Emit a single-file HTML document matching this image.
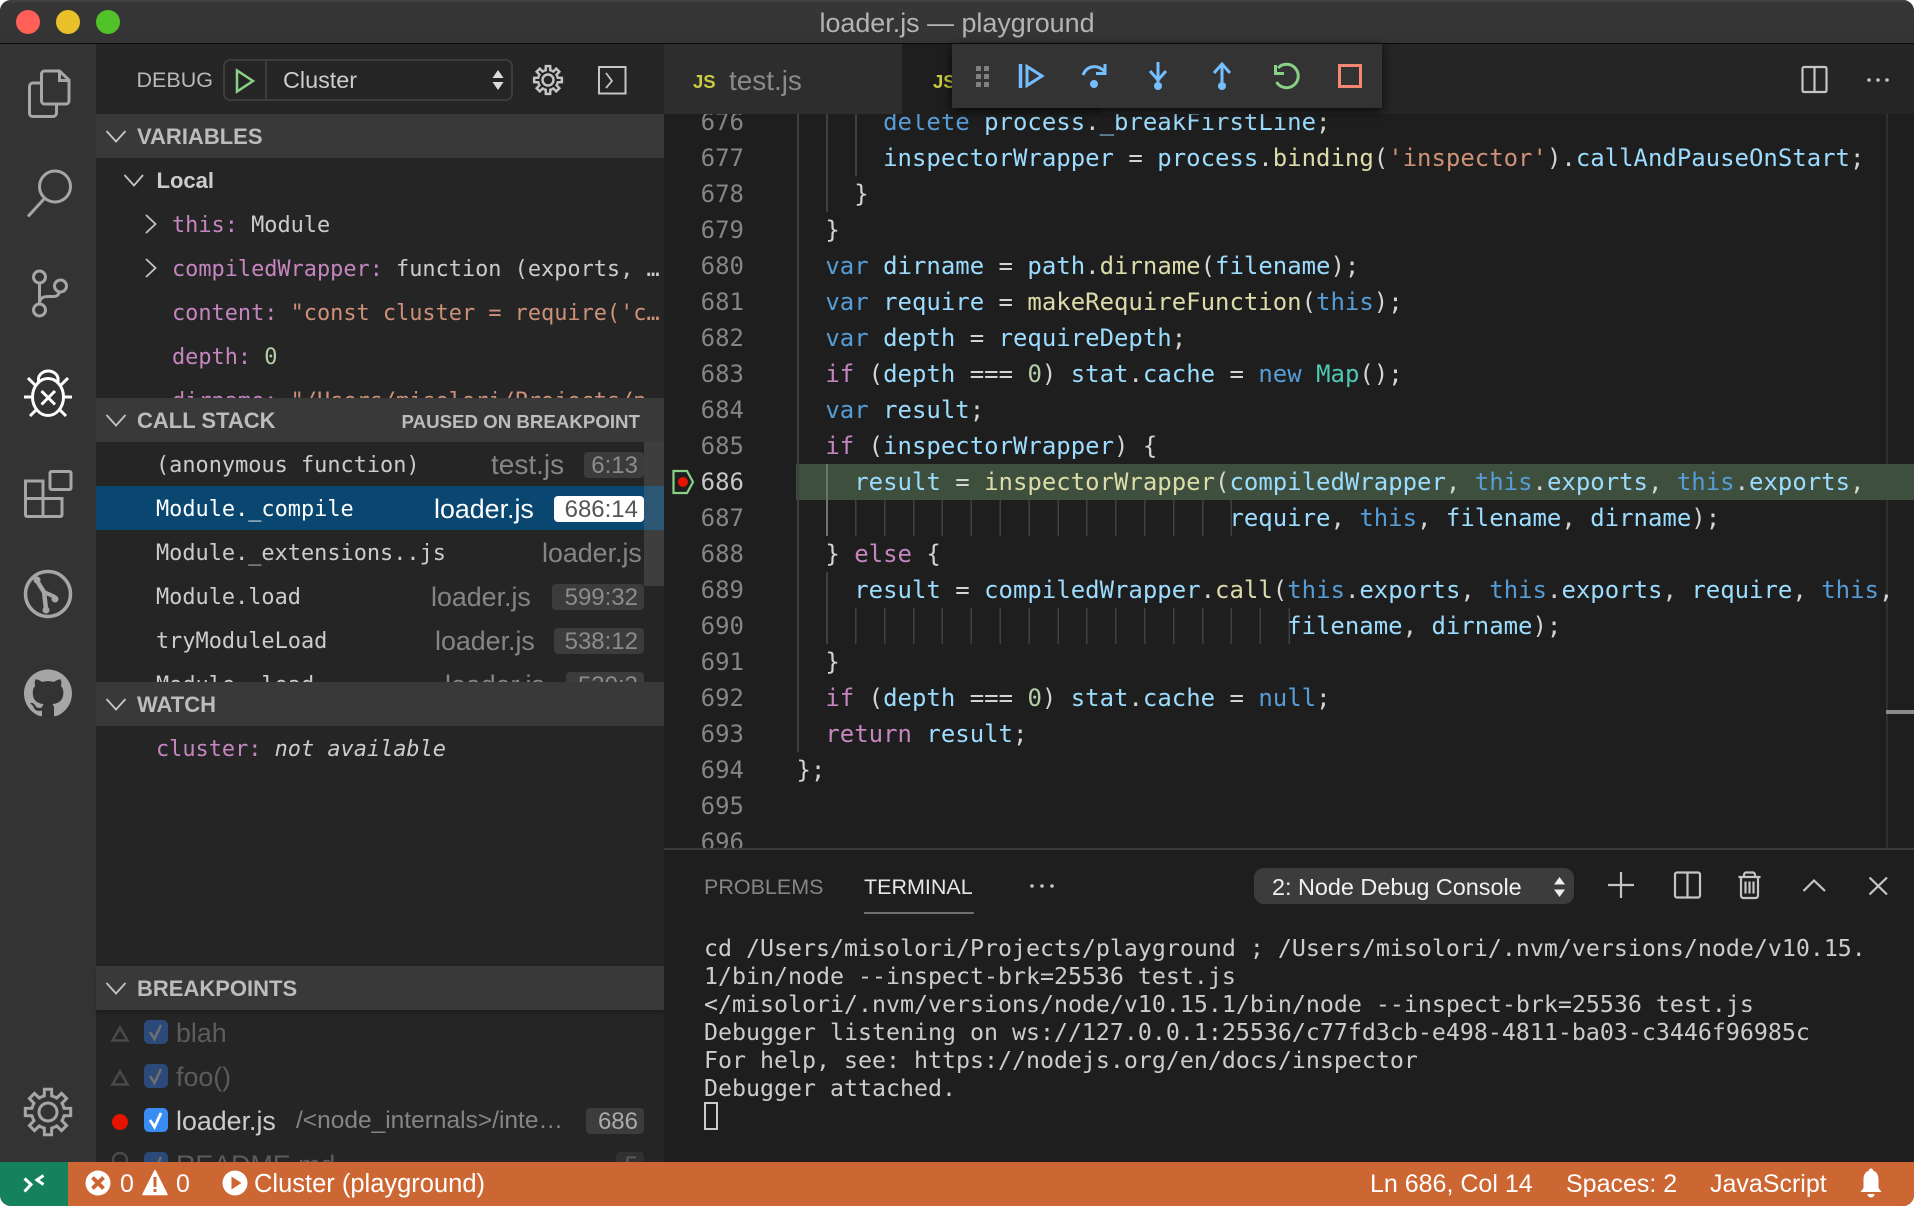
<!DOCTYPE html>
<html><head><meta charset="utf-8"><title>loader.js — playground</title>
<style>
html,body{margin:0;padding:0;background:#fff;width:1914px;height:1206px;overflow:hidden}
#w{position:absolute;left:0;top:0;width:1914px;height:1206px;overflow:hidden;border-radius:11px;background:#252526;font-family:"Liberation Sans",sans-serif}
#w div,#w span.a,#w svg{position:absolute}
svg{overflow:visible}
.m{font-family:"DejaVu Sans Mono","Liberation Mono",monospace;font-variant-ligatures:none;white-space:pre}
.hdr{left:96px;width:568px;height:44px;background:#393939;color:#bcbcbc;font-weight:bold;font-size:22px;line-height:46px;text-indent:41px}
.row{height:44px;line-height:44px;white-space:pre;overflow:hidden}
.sm{font-family:"DejaVu Sans Mono",monospace;font-size:21.9px;color:#ccc;white-space:pre;line-height:47px;height:44px}
.f{font-size:26.8px;color:#858585;line-height:46px;height:44px;white-space:pre}
.b{background:#3c3c3c;color:#8c8c8c;font-size:24px;line-height:27px;height:26px;border-radius:4px;text-align:right;padding-right:6px;box-sizing:border-box;white-space:pre}
.p{color:#c586c0}.k{color:#569cd6}.v{color:#9cdcfe}.fn{color:#dcdcaa}.s{color:#ce9178}.n{color:#b5cea8}.t{color:#4ec9b0}
.ln{left:664px;width:80px;text-align:right;color:#858585;font-size:24px;line-height:36px;height:36px}
.c{left:796.5px;font-size:23.97px;line-height:36px;height:36px;color:#d4d4d4}
.g{background:#404040;width:1.5px}
.gg{background:repeating-linear-gradient(90deg,#404040 0,#404040 1.5px,transparent 1.5px,transparent 28.9px)}
.term{left:704px;font-size:23.25px;line-height:28px;height:28px;color:#ccc}
.st{color:#fff;font-size:25px;line-height:44px;height:44px;top:1162px;white-space:pre}
</style></head><body><div id="w">

<!-- title bar -->
<div style="left:0;top:0;width:1914px;height:43px;background:linear-gradient(#444444,#363636 8%,#343434);border-bottom:1.5px solid #0c0c0c"></div>
<div style="left:16px;top:10px;width:24px;height:24px;border-radius:50%;background:#fe5f57"></div>
<div style="left:56px;top:10px;width:24px;height:24px;border-radius:50%;background:#e8c02a"></div>
<div style="left:96px;top:10px;width:24px;height:24px;border-radius:50%;background:#52c22b"></div>
<div style="left:0;width:1914px;top:4px;height:38px;line-height:38px;text-align:center;color:#b4b4b4;font-size:26.9px;white-space:pre;text-indent:0">loader.js — playground</div>

<!-- activity bar -->
<div style="left:0;top:44px;width:96px;height:1118px;background:#333333"></div>
<svg style="left:0;top:0" width="96" height="1162" fill="none" stroke="#a6a6a6" stroke-width="3">
 <path d="M41 83H33a3.500 3.500 0 0 0-3.500 3.500V113.500a3 3 0 0 0 3 3H53a3.500 3.500 0 0 0 3.500-3.500V105"/>
 <path d="M44.500 71H59.500L69 80V101a3 3 0 0 1-3 3H44.500a3 3 0 0 1-3-3V74a3 3 0 0 1 3-3Z"/>
 <path d="M59.500 71.500V80.500H68.500"/>
 <circle cx="55" cy="186.500" r="15.500"/><path d="M44 199 28 216.500"/>
 <circle cx="39.500" cy="277" r="6"/><circle cx="60.500" cy="286" r="6"/><circle cx="39.500" cy="310" r="6"/>
 <path d="M39.500 283V304M39.500 302C41 297 44 296.500 49 296.500H54C57 296.500 58.500 295 59.500 292"/>
 <g stroke="#fff">
  <path d="M38.500 382V378A10 9 0 0 1 58 378V382"/>
  <ellipse cx="48" cy="397" rx="15.500" ry="18.500"/>
  <path d="M41.500 391 55 404.500M55 391 41.500 404.500M28 378 35 385M68 378 61 385M24 397H32.500M64 397H72M30 416 37 409M66 416 59 409"/>
 </g>
 <path d="M51.500 471.500h18a1.500 1.500 0 0 1 1.500 1.500v15a1.500 1.500 0 0 1-1.500 1.500h-18a1.500 1.500 0 0 1-1.500-1.500v-15a1.500 1.500 0 0 1 1.500-1.500Z"/>
 <path d="M25.500 481h17.500V498.500H62V515a1.500 1.500 0 0 1-1.500 1.500H27a1.500 1.500 0 0 1-1.500-1.500ZM25.500 498.500H43V516.500"/>
 <circle cx="48" cy="594" r="22.500" stroke-width="3.500"/>
 <path d="M37 581 44 592 46 609" stroke-width="4.500"/><path d="M44 592 55 597" stroke-width="4"/>
 <circle cx="46" cy="610" r="3.500" fill="#a6a6a6" stroke="none"/><circle cx="55" cy="599" r="3.500" fill="#a6a6a6" stroke="none"/><circle cx="37" cy="580" r="3.500" fill="#a6a6a6" stroke="none"/>
 <path fill="#a6a6a6" stroke="none" transform="translate(24 669.500) scale(3)" d="M8 0C3.580 0 0 3.580 0 8c0 3.540 2.290 6.530 5.470 7.590.4.070.55-.17.55-.38 0-.19-.01-.82-.01-1.490-2.010.37-2.530-.49-2.690-.94-.09-.23-.48-.94-.82-1.130-.28-.15-.68-.52-.01-.53.63-.01 1.080.58 1.230.82.72 1.210 1.870.87 2.330.66.07-.52.28-.87.51-1.070-1.780-.2-3.640-.89-3.640-3.950 0-.87.31-1.590.82-2.150-.08-.2-.36-1.020.08-2.120 0 0 .67-.21 2.200.82.64-.18 1.320-.27 2-.27.68 0 1.360.09 2 .27 1.530-1.040 2.200-.82 2.200-.82.44 1.100.16 1.920.08 2.120.51.56.82 1.270.82 2.150 0 3.070-1.870 3.750-3.650 3.950.29.25.54.73.54 1.480 0 1.070-.01 1.930-.01 2.200 0 .21.15.46.55.38A8.013 8.013 0 0016 8c0-4.420-3.580-8-8-8z"/>
</svg>
<svg style="left:0;top:0" width="96" height="1162" fill="none" stroke="#a6a6a6" stroke-width="3">
 <defs><path id="t" d="M-6.310 -15.240L-3.710 -16.080L-3.600 -22.720L3.600 -22.720L3.710 -16.080L6.310 -15.240"/></defs>
 <g transform="translate(48 1112)">
  <use href="#t"/><use href="#t" transform="rotate(45)"/><use href="#t" transform="rotate(90)"/><use href="#t" transform="rotate(135)"/><use href="#t" transform="rotate(180)"/><use href="#t" transform="rotate(225)"/><use href="#t" transform="rotate(270)"/><use href="#t" transform="rotate(315)"/>
  <circle r="9"/>
 </g>
</svg>

<!-- sidebar -->
<div style="left:96px;top:44px;width:568px;height:1118px;background:#252526"></div>
<div style="left:136.500px;top:58px;height:44px;line-height:44px;font-size:21.500px;color:#b8b8b8">DEBUG</div>
<div style="left:223px;top:59px;width:290px;height:42px;box-sizing:border-box;border:2px solid #3c3c3c;border-radius:7px"></div>
<div style="left:265px;top:61px;width:2px;height:38px;background:#3c3c3c"></div>
<svg style="left:0;top:0" width="664" height="110" fill="none">
 <path d="M237 70.500V91.500L253 81Z" stroke="#89d185" stroke-width="2.500"/>
 <path d="M498 70 503.500 78H492.500ZM498 90 503.500 82H492.500Z" fill="#ddd"/>
 <g transform="translate(548 80) scale(.61)" stroke="#c5c5c5" stroke-width="4">
  <use href="#t"/><use href="#t" transform="rotate(45)"/><use href="#t" transform="rotate(90)"/><use href="#t" transform="rotate(135)"/><use href="#t" transform="rotate(180)"/><use href="#t" transform="rotate(225)"/><use href="#t" transform="rotate(270)"/><use href="#t" transform="rotate(315)"/>
  <circle r="9"/>
 </g>
 <rect x="599" y="67" width="26.500" height="26.500" stroke="#c5c5c5" stroke-width="2"/>
 <path d="M606 73 612 81 606 88" stroke="#c5c5c5" stroke-width="1.800"/>
</svg>
<div style="left:283px;top:58px;height:44px;line-height:44px;font-size:23.400px;color:#ccc">Cluster</div>

<div class="hdr" style="top:114px">VARIABLES</div>
<div class="hdr" style="top:398px">CALL STACK</div>
<div style="left:401.500px;top:398px;height:46px;line-height:47.500px;font-size:18.700px;font-weight:bold;color:#bcbcbc;white-space:pre">PAUSED ON BREAKPOINT</div>
<div class="hdr" style="top:682px">WATCH</div>
<div class="hdr" style="top:966px;box-shadow:0 3px 5px rgba(0,0,0,.2)">BREAKPOINTS</div>

<!-- variables -->
<div style="left:96px;top:158px;width:564px;height:240px;overflow:hidden">
 <div style="left:60.500px;top:0;height:44px;line-height:46px;font-weight:bold;font-size:22px;color:#ccc">Local</div>
 <div class="sm" style="left:76px;top:44px"><span class="p">this:</span> Module</div>
 <div class="sm" style="left:76px;top:88px"><span class="p">compiledWrapper:</span> function (exports, …</div>
 <div class="sm" style="left:76px;top:132px"><span class="p">content:</span> <span class="s">"const cluster = require('c…</span></div>
 <div class="sm" style="left:76px;top:176px"><span class="p">depth:</span> <span class="n">0</span></div>
 <div class="sm" style="left:76px;top:220px"><span class="p">dirname:</span> <span class="s">"/Users/misolori/Projects/p…</span></div>
</div>

<!-- chevrons -->
<svg style="left:0;top:0" width="664" height="1010" fill="none" stroke="#c5c5c5" stroke-width="1.800">
 <path d="M106.500 131 116 141.500 125.500 131M106.500 415 116 425.500 125.500 415M106.500 699 116 709.500 125.500 699M106.500 983 116 993.500 125.500 983"/>
 <path d="M124.500 175 134 185.500 143 175"/>
 <path d="M146 215 155.500 224 146 233M146 259 155.500 268 146 277"/>
</svg>

<!-- call stack -->
<div style="left:96px;top:442px;width:568px;height:240px;overflow:hidden">
 <div style="left:0;top:44px;width:568px;height:44px;background:#094771"></div>
 <div class="sm" style="left:60px;top:0">(anonymous function)</div>
 <div class="f" style="left:395px;top:0;font-size:28px">test.js</div>
 <div class="b" style="left:488px;top:10px;width:60px">6:13</div>

 <div class="sm" style="left:60px;top:44px;color:#fff">Module._compile</div>
 <div class="f" style="left:338px;top:44px;color:#fff">loader.js</div>
 <div class="b" style="left:458px;top:54px;width:90px;background:#fff;color:#555">686:14</div>

 <div class="sm" style="left:60px;top:88px">Module._extensions..js</div>
 <div class="f" style="left:446px;top:88px;width:101px;overflow:hidden">loader.js</div>

 <div class="sm" style="left:60px;top:132px">Module.load</div>
 <div class="f" style="left:335px;top:132px">loader.js</div>
 <div class="b" style="left:456px;top:142px;width:92px">599:32</div>

 <div class="sm" style="left:60px;top:176px">tryModuleLoad</div>
 <div class="f" style="left:339px;top:176px">loader.js</div>
 <div class="b" style="left:458px;top:186px;width:90px">538:12</div>

 <div class="sm" style="left:60px;top:220px">Module._load</div>
 <div class="f" style="left:349px;top:220px">loader.js</div>
 <div class="b" style="left:470px;top:230px;width:78px">530:3</div>

 <div style="left:548px;top:0;width:20px;height:144px;background:rgba(121,121,121,.3)"></div>
</div>

<!-- watch -->
<div class="sm" style="left:156px;top:726px"><span class="p">cluster:</span> <i>not available</i></div>

<!-- breakpoints -->
<div style="left:96px;top:1010px;width:568px;height:152px;overflow:hidden">
 <svg style="left:0;top:0" width="568" height="152" fill="none">
  <path d="M31.500 30.500 H16.500 L24 17.500 Z M31.500 74.500 H16.500 L24 61.500 Z" stroke="#4a4a4a" stroke-width="2.500"/>
  <circle cx="24" cy="112" r="8" fill="#e51400"/>
  <circle cx="24" cy="150" r="7" stroke="#4a4a4a" stroke-width="2.500"/>
  <rect x="48" y="10" width="24" height="24" rx="5" fill="#2b4a7a"/>
  <rect x="48" y="54" width="24" height="24" rx="5" fill="#2b4a7a"/>
  <rect x="48" y="98" width="24" height="24" rx="5" fill="#3a8cf5"/>
  <rect x="48" y="142" width="24" height="24" rx="5" fill="#2b4a7a"/>
  <path d="M54 22 58.500 29 65 15M54 66 58.500 73 65 59M54 154 58.500 161 65 147" stroke="#6e6e6e" stroke-width="2.500"/>
  <path d="M54 110 58.500 117 65 103" stroke="#fff" stroke-width="2.800"/>
 </svg>
 <div class="f" style="left:80px;top:0;color:#5c5c5c">blah</div>
 <div class="f" style="left:80px;top:44px;color:#5c5c5c">foo()</div>
 <div class="f" style="left:80px;top:88px;color:#ccc">loader.js</div>
 <div class="f" style="left:200px;top:88px;width:270px;overflow:hidden;font-size:24.500px;color:#858585">/&lt;node_internals&gt;/inte…</div>
 <div class="b" style="left:490px;top:98px;width:58px;color:#aaa">686</div>
 <div class="f" style="left:80px;top:132px;color:#5c5c5c">README.md</div>
 <div class="b" style="left:520px;top:142px;width:28px;background:#313131;color:#5c5c5c">5</div>
</div>

<!-- editor -->
<div style="left:664px;top:44px;width:1250px;height:1118px;background:#1e1e1e"></div>
<div id="code" style="left:664px;top:114px;width:1250px;height:734px;overflow:hidden">
 <div style="left:1222px;top:0;width:1.500px;height:734px;background:#2f2f2f"></div>
 <div style="left:132px;top:350px;width:1118px;height:36px;background:#3e4f3d"></div>
 <div class="g" style="left:133px;top:0;height:638px"></div>
 <div class="g" style="left:162px;top:0;height:98px"></div>
 <div class="g" style="left:191px;top:0;height:62px"></div>
 <div class="g" style="left:162px;top:350px;height:72px;background:#707070"></div>
 <div class="g" style="left:162px;top:458px;height:72px"></div>
 <div class="gg" style="left:191px;top:386px;height:36px;width:377.500px"></div>
 <div class="gg" style="left:191px;top:494px;height:36px;width:435.300px"></div>
 <div style="left:1222px;top:596px;width:28px;height:4px;background:#8a8a8a"></div>
</div>
<div style="left:664px;top:114px;width:1250px;height:734px;overflow:hidden">
 <div style="left:-664px;top:-114px;width:1914px;height:1206px">
<div class="ln m" style="top:104px">676</div><div class="c m" style="top:104px">      <span class="k">delete</span> <span class="v">process</span>.<span class="v">_breakFirstLine</span>;</div>
<div class="ln m" style="top:140px">677</div><div class="c m" style="top:140px">      <span class="v">inspectorWrapper</span> = <span class="v">process</span>.<span class="fn">binding</span>(<span class="s">'inspector'</span>).<span class="v">callAndPauseOnStart</span>;</div>
<div class="ln m" style="top:176px">678</div><div class="c m" style="top:176px">    }</div>
<div class="ln m" style="top:212px">679</div><div class="c m" style="top:212px">  }</div>
<div class="ln m" style="top:248px">680</div><div class="c m" style="top:248px">  <span class="k">var</span> <span class="v">dirname</span> = <span class="v">path</span>.<span class="fn">dirname</span>(<span class="v">filename</span>);</div>
<div class="ln m" style="top:284px">681</div><div class="c m" style="top:284px">  <span class="k">var</span> <span class="v">require</span> = <span class="fn">makeRequireFunction</span>(<span class="k">this</span>);</div>
<div class="ln m" style="top:320px">682</div><div class="c m" style="top:320px">  <span class="k">var</span> <span class="v">depth</span> = <span class="v">requireDepth</span>;</div>
<div class="ln m" style="top:356px">683</div><div class="c m" style="top:356px">  <span class="p">if</span> (<span class="v">depth</span> === <span class="n">0</span>) <span class="v">stat</span>.<span class="v">cache</span> = <span class="k">new</span> <span class="t">Map</span>();</div>
<div class="ln m" style="top:392px">684</div><div class="c m" style="top:392px">  <span class="k">var</span> <span class="v">result</span>;</div>
<div class="ln m" style="top:428px">685</div><div class="c m" style="top:428px">  <span class="p">if</span> (<span class="v">inspectorWrapper</span>) {</div>
<div class="ln m" style="top:464px;color:#c6c6c6">686</div><div class="c m" style="top:464px">    <span class="v">result</span> = <span class="fn">inspectorWrapper</span>(<span class="v">compiledWrapper</span>, <span class="k">this</span>.<span class="v">exports</span>, <span class="k">this</span>.<span class="v">exports</span>,</div>
<div class="ln m" style="top:500px">687</div><div class="c m" style="top:500px">                              <span class="v">require</span>, <span class="k">this</span>, <span class="v">filename</span>, <span class="v">dirname</span>);</div>
<div class="ln m" style="top:536px">688</div><div class="c m" style="top:536px">  } <span class="p">else</span> {</div>
<div class="ln m" style="top:572px">689</div><div class="c m" style="top:572px">    <span class="v">result</span> = <span class="v">compiledWrapper</span>.<span class="fn">call</span>(<span class="k">this</span>.<span class="v">exports</span>, <span class="k">this</span>.<span class="v">exports</span>, <span class="v">require</span>, <span class="k">this</span>,</div>
<div class="ln m" style="top:608px">690</div><div class="c m" style="top:608px">                                  <span class="v">filename</span>, <span class="v">dirname</span>);</div>
<div class="ln m" style="top:644px">691</div><div class="c m" style="top:644px">  }</div>
<div class="ln m" style="top:680px">692</div><div class="c m" style="top:680px">  <span class="p">if</span> (<span class="v">depth</span> === <span class="n">0</span>) <span class="v">stat</span>.<span class="v">cache</span> = <span class="k">null</span>;</div>
<div class="ln m" style="top:716px">693</div><div class="c m" style="top:716px">  <span class="p">return</span> <span class="v">result</span>;</div>
<div class="ln m" style="top:752px">694</div><div class="c m" style="top:752px">};</div>
<div class="ln m" style="top:788px">695</div>
<div class="ln m" style="top:824px">696</div>
 </div>
</div>
<svg style="left:0;top:0" width="720" height="520" fill="none">
 <path d="M673.500 471H687L693 482 687 493H673.500Z" stroke="#89d185" stroke-width="2.200"/>
 <circle cx="683" cy="482" r="5" fill="#e51400"/>
</svg>

<!-- tabs -->
<div style="left:664px;top:44px;width:1250px;height:70px;background:#252526"></div>
<div style="left:664px;top:44px;width:238px;height:70px;background:#2d2d2d"></div>
<div style="left:902px;top:44px;width:200px;height:70px;background:#1e1e1e"></div>
<div style="left:693px;top:64px;height:36px;line-height:36px;font-size:18.500px;font-weight:bold;color:#cbcb41">JS</div>
<div style="left:729px;top:63px;height:36px;line-height:36px;font-size:27.900px;color:#8a8a8a">test.js</div>
<div style="left:933px;top:64px;height:36px;line-height:36px;font-size:18.500px;font-weight:bold;color:#cbcb41">JS</div>
<svg style="left:1790px;top:55px" width="124" height="50" fill="none" stroke="#c5c5c5" stroke-width="2.200">
 <rect x="12.500" y="12" width="24" height="25" rx="1.500"/><path d="M24.500 12V37"/>
 <circle cx="79" cy="25" r="1.800" fill="#c5c5c5" stroke="none"/><circle cx="88" cy="25" r="1.800" fill="#c5c5c5" stroke="none"/><circle cx="97" cy="25" r="1.800" fill="#c5c5c5" stroke="none"/>
</svg>

<!-- debug toolbar -->
<div style="left:952px;top:44px;width:430px;height:64px;background:#333333;box-shadow:0 3px 10px rgba(0,0,0,.75)"></div>
<svg style="left:950px;top:40px" width="440" height="80" fill="none">
 <g fill="#7f7f7f"><rect x="26" y="26" width="5" height="5"/><rect x="34" y="26" width="5" height="5"/><rect x="26" y="34" width="5" height="5"/><rect x="34" y="34" width="5" height="5"/><rect x="26" y="42" width="5" height="5"/><rect x="34" y="42" width="5" height="5"/></g>
 <g stroke="#75beff" stroke-width="3">
  <path d="M70.500 24V48" stroke-width="3.500"/>
  <path d="M77 26.500V45.500L92 36Z"/>
  <path d="M133 35C137 25 148 24 155 32"/>
  <path d="M155 24V33.500H146"/>
  <path d="M208 22V42M200 31 208 40 216 31"/>
  <path d="M272 42V24M264 33 272 24 280 33"/>
 </g>
 <g fill="#75beff"><circle cx="144" cy="44" r="4"/><circle cx="208" cy="46" r="4"/><circle cx="272" cy="46" r="4"/></g>
 <path d="M328 28A11.700 11.700 0 1 1 326.500 42M325.500 25V33.500H334" stroke="#89d185" stroke-width="3"/>
 <rect x="389.500" y="25.500" width="21" height="21" stroke="#f48771" stroke-width="3"/>
</svg>

<!-- panel -->
<div style="left:664px;top:848px;width:1250px;height:314px;background:#1e1e1e;border-top:2px solid #3a3a3a;box-sizing:border-box"></div>
<div style="left:704px;top:869px;height:36px;line-height:36px;font-size:21.500px;color:#858585">PROBLEMS</div>
<div style="left:864px;top:869px;height:36px;line-height:36px;font-size:21.500px;color:#e7e7e7">TERMINAL</div>
<div style="left:864px;top:912px;width:110px;height:2px;background:#6e6e6e"></div>
<div style="left:1254px;top:868px;width:320px;height:36px;background:#3c3c3c;border-radius:10px"></div>
<div style="left:1272px;top:868.500px;height:36px;line-height:36px;font-size:23.400px;color:#f0f0f0;white-space:pre">2: Node Debug Console</div>
<svg style="left:1020px;top:860px" width="894" height="60" fill="none" stroke="#c5c5c5" stroke-width="2.200">
 <circle cx="12" cy="26" r="1.800" fill="#c5c5c5" stroke="none"/><circle cx="22" cy="26" r="1.800" fill="#c5c5c5" stroke="none"/><circle cx="32" cy="26" r="1.800" fill="#c5c5c5" stroke="none"/>
 <path d="M539.500 17 545 24.500H534ZM539.500 37 545 29.500H534Z" fill="#eee" stroke="none"/>
 <path d="M588 25H614M601 12V38"/>
 <rect x="655" y="12.500" width="25" height="25" rx="2"/><path d="M667.500 12.500V37.500"/>
 <path d="M718.500 17H740.500M724 17V15C724 13.500 725 12.500 726 12.500H733C734 12.500 735 13.500 735 15V17M721 17.500V35.500C721 37 722 38 723.500 38H735.500C737 38 738 37 738 35.500V17.500M725.500 21.500V33.500M729.500 21.500V33.500M733.500 21.500V33.500"/>
 <path d="M783.500 31 794 20.500 805 31"/>
 <path d="M849.500 17.500 867 34.500M867 17.500 849.500 34.500"/>
</svg>

<div class="term m" style="top:935px">cd /Users/misolori/Projects/playground ; /Users/misolori/.nvm/versions/node/v10.15.</div>
<div class="term m" style="top:963px">1/bin/node --inspect-brk=25536 test.js</div>
<div class="term m" style="top:991px">&lt;/misolori/.nvm/versions/node/v10.15.1/bin/node --inspect-brk=25536 test.js</div>
<div class="term m" style="top:1019px">Debugger listening on ws://127.0.0.1:25536/c77fd3cb-e498-4811-ba03-c3446f96985c</div>
<div class="term m" style="top:1047px">For help, see: https://nodejs.org/en/docs/inspector</div>
<div class="term m" style="top:1075px">Debugger attached.</div>
<div style="left:704px;top:1102px;width:14px;height:28px;box-sizing:border-box;border:2px solid #ccc"></div>

<!-- status bar -->
<div style="left:0;top:1162px;width:1914px;height:44px;background:#cc6633"></div>
<div style="left:0;top:1162px;width:68px;height:44px;background:#16825d"></div>
<svg style="left:0;top:1162px" width="320" height="44" fill="none">
 <path d="M24.500 16.500 31 22.500 24.500 29.500M43.500 13.500 37 18 43.500 22.500" stroke="#fff" stroke-width="3"/>
 <circle cx="98" cy="21" r="12.500" fill="#fff"/>
 <path d="M92.500 15.500 103.500 26.500M103.500 15.500 92.500 26.500" stroke="#cc6633" stroke-width="4"/>
 <path d="M155 8.500 167 32.500H143Z" fill="#fff" stroke="#fff" stroke-width="1.500" stroke-linejoin="round"/>
 <path d="M155 15V25M155 27V30" stroke="#cc6633" stroke-width="3"/>
 <circle cx="235" cy="21" r="12.500" fill="#fff"/>
 <path d="M231.500 14.500V27.500L241.500 21Z" fill="#cc6633"/>
</svg>
<div class="st" style="left:120px">0</div>
<div class="st" style="left:176px">0</div>
<div class="st" style="left:254px;font-size:25.500px">Cluster (playground)</div>
<div class="st" style="left:1370px">Ln 686, Col 14</div>
<div class="st" style="left:1566px">Spaces: 2</div>
<div class="st" style="left:1710px">JavaScript</div>
<svg style="left:1855px;top:1166px" width="32" height="36" fill="#fff">
 <path d="M16 2.500C17.500 2.500 18 3.500 18 4.500 22 6 23.500 9 23.500 14V22L26.500 26H5.500L8.500 22V14C8.500 9 10 6 14 4.500 14 3.500 14.500 2.500 16 2.500Z"/>
 <path d="M12.500 28H19.500A3.500 3.500 0 0 1 12.500 28Z"/>
</svg>

</div></body></html>
